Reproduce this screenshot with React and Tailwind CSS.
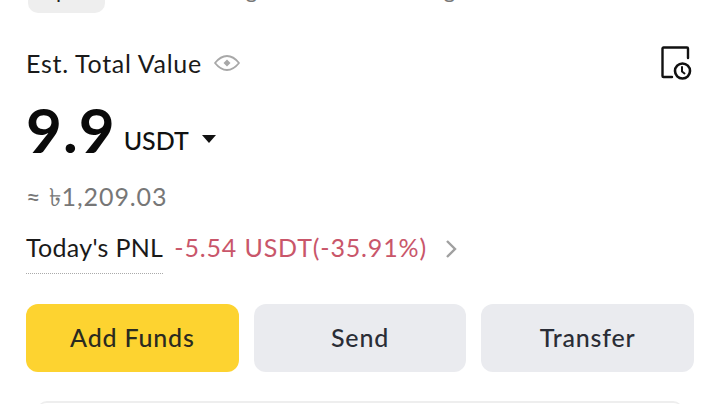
import React from 'react';

const font = { fontFamily: '"Lato", "Noto Sans", sans-serif' };

// Little clock-on-page icon for the history link
const HistoryIcon = () => (
    <svg className="mr-[1px]" width="32" height="34" viewBox="0 0 32 34" fill="none" stroke="#111" strokeWidth="2.400" strokeLinecap="round" strokeLinejoin="round">
        <path d="M27 12V2.500a1 1 0 0 0-1-1H2.500a1 1 0 0 0-1 1V30a1 1 0 0 0 1 1H11" />
        <circle cx="21.500" cy="25" r="7.500" strokeWidth="2.600" />
        <path d="M21 21v4.500l2.500 2" strokeWidth="2" />
    </svg>
);

const EyeIcon = () => (
    <svg width="28" height="18" viewBox="0 0 28 18" fill="none">
        <path d="M2 9C6 4 10 2 14 2s8 2 12 7c-4 5-8 7-12 7S6 14 2 9z" stroke="#a8a8a8" strokeWidth="1.800" strokeLinejoin="round" />
        <path d="M14 5.500 17.500 9 14 12.500 10.500 9z" fill="#a8a8a8" />
    </svg>
);

const Wallet = () => {
    return (
        <div className="h-[404px] w-[720px] overflow-hidden bg-white" style={font}>
            {/* Tabs, scrolled mostly out of view */}
            <div className="h-[13px] overflow-hidden">
                <div className="mt-[-27px] flex items-start pl-[28px] text-[22px] leading-[34px] text-[#777]">
                    <span className="flex h-[40px] w-[77px] justify-center rounded-[10px] bg-[#eeeeee] text-[#222]">Spot</span>
                    <span className="ml-[102px]">Margin</span>
                    <span className="ml-[103px]">Funding</span>
                </div>
            </div>

            <div className="px-[26px]">
                <div className="mt-[32px] flex h-[36px] items-center justify-between">
                    <div className="flex items-center gap-[11px]">
                        <span className="text-[25px] leading-[36px] tracking-[0.7px] text-[#1a1a1a]">Est. Total Value</span>
                        <EyeIcon />
                    </div>
                    <HistoryIcon />
                </div>

                <div className="mt-[17px] flex h-[62px] items-center">
                    <span className="text-[62px] font-bold leading-[62px] tracking-[1px] text-[#0a0a0a]">9.9</span>
                    <span className="ml-[8px] mt-[24px] text-[25px] font-medium text-[#111]">USDT</span>
                    <span className="ml-[13px] mt-[20px] h-0 w-0 border-x-[7px] border-t-[8px] border-x-transparent border-t-[#111]" />
                </div>

                <div className="mt-[19px] text-[25px] leading-[34px] tracking-[0.9px] text-[#777]">≈ ৳1,209.03</div>

                <div className="mt-[16px] flex h-[45px] items-start">
                    <span className="h-[45px] border-b border-dotted border-[#aaa] text-[25px] leading-[36px] tracking-[0.3px] text-[#1a1a1a]">Today's PNL</span>
                    <span className="ml-[11px] text-[25px] leading-[36px] tracking-[0.85px] text-[#c9566a]">-5.54 USDT(-35.91%)</span>
                    <svg className="ml-[17px] mt-[10px]" width="14" height="20" viewBox="0 0 14 20" fill="none" stroke="#a0a0a0" strokeWidth="2.400">
                        <path d="M3 2l8 8-8 8" />
                    </svg>
                </div>

                <div className="mt-[30px] flex gap-[15px]">
                    <button className="h-[68px] flex-1 rounded-[12px] bg-[#fdd330] text-[25px] font-medium tracking-[0.8px] text-[#2a2a20]">Add Funds</button>
                    <button className="h-[68px] flex-1 rounded-[12px] bg-[#eaebef] text-[25px] font-medium tracking-[0.8px] text-[#2a2d36]">Send</button>
                    <button className="h-[68px] flex-1 rounded-[12px] bg-[#eaebef] text-[25px] font-medium tracking-[0.8px] text-[#2a2d36]">Transfer</button>
                </div>

                {/* Top edge of the next card */}
                <div className="mx-[11px] mt-[29px] h-[20px] rounded-t-[10px] border-t-2 border-[#eeeeee]" />
            </div>
        </div>
    );
};

export default Wallet;
